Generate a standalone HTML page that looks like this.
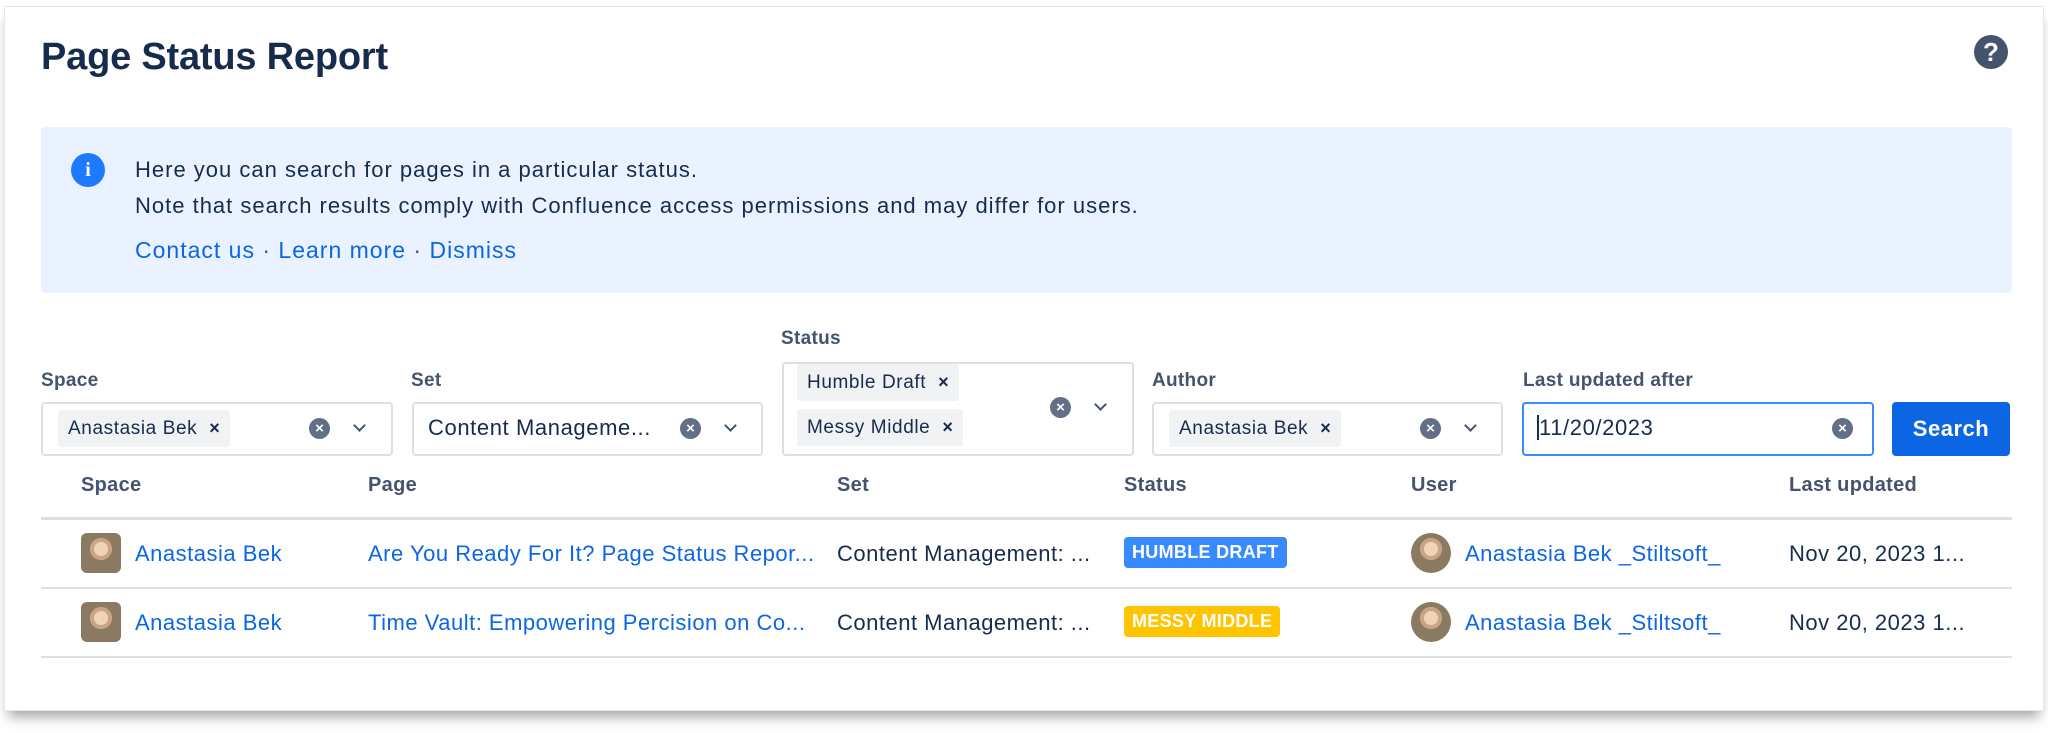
<!DOCTYPE html>
<html><head><meta charset="utf-8"><style>
*{box-sizing:border-box;margin:0;padding:0}
body{width:2048px;height:733px;background:#fff;font-family:"Liberation Sans",Arial,sans-serif;position:relative;overflow:hidden;color:#172b4d}
.card{position:absolute;left:4px;top:6px;width:2040px;height:705px;background:#fff;border:1px solid #e6e6e6;box-shadow:0 10px 12px -4px rgba(0,0,0,.35)}
.a{position:absolute;white-space:nowrap}
h1{position:absolute;left:41px;top:36px;font-size:38px;font-weight:bold;color:#172b4d;letter-spacing:-.2px}
.info{position:absolute;left:41px;top:127px;width:1971px;height:166px;background:#e9f2fe;border-radius:4px}
.t22{font-size:22px;line-height:28px;letter-spacing:.5px}
.ti{font-size:22px;line-height:28px;letter-spacing:1px}
.lnk{color:#0c66e4}
.lbl{font-size:19px;font-weight:bold;color:#44546f;letter-spacing:.3px}
.box{position:absolute;top:402px;height:54px;border:2px solid #dcdfe4;border-radius:4px;background:#fff}
.chip{position:absolute;background:#f1f2f4;border-radius:3px;height:37px;font-size:19px;line-height:37px;padding:0 10px;color:#172b4d;letter-spacing:.6px}
.chip b{font-weight:bold;margin-left:12px;font-size:18px}
.clr{position:absolute;width:21px;height:21px;border-radius:50%;background:#626f86;color:#fff;font-size:15px;font-weight:bold;text-align:center;line-height:21px}
.chev{position:absolute;width:9px;height:9px;border-right:2.5px solid #44546f;border-bottom:2.5px solid #44546f;transform:rotate(45deg)}
.th{position:absolute;top:474px;font-size:20px;font-weight:bold;color:#44546f;letter-spacing:.3px}
.hr{position:absolute;left:41px;width:1971px;background:#dcdfe4}
.av{position:absolute;width:40px;height:40px;border-radius:6px;background:radial-gradient(circle at 50% 40%,#f1d2b5 0 22%,#c9a585 23% 35%,#8a7a62 36%)}
.avr{border-radius:50%}
.loz{position:absolute;height:31px;line-height:31px;padding:0 8px;border-radius:4px;color:#fff;font-weight:bold;font-size:18px;letter-spacing:.3px}
</style></head><body>
<div class="card"></div>
<h1>Page Status Report</h1>
<div class="a" style="left:1974px;top:35px;width:34px;height:34px;border-radius:50%;background:#44546f;color:#fff;font-weight:bold;font-size:26px;text-align:center;line-height:34px">?</div>
<div class="info"></div>
<div class="a" style="left:71px;top:153px;width:34px;height:34px;border-radius:50%;background:#1d7afc;color:#fff;font-weight:bold;font-size:20px;text-align:center;line-height:34px;font-family:'Liberation Serif',serif">i</div>
<div class="a ti" style="left:135px;top:156px">Here you can search for pages in a particular status.</div>
<div class="a ti" style="left:135px;top:192px">Note that search results comply with Confluence access permissions and may differ for users.</div>
<div class="a" style="left:135px;top:236px;font-size:23px;line-height:28px;letter-spacing:1px"><span class="lnk">Contact us</span> <span style="color:#44546f">·</span> <span class="lnk">Learn more</span> <span style="color:#44546f">·</span> <span class="lnk">Dismiss</span></div>

<div class="a lbl" style="left:41px;top:370px">Space</div>
<div class="a lbl" style="left:411px;top:370px">Set</div>
<div class="a lbl" style="left:781px;top:328px">Status</div>
<div class="a lbl" style="left:1152px;top:370px">Author</div>
<div class="a lbl" style="left:1523px;top:370px">Last updated after</div>

<div class="box" style="left:41px;width:352px"></div>
<div class="chip" style="left:58px;top:410px">Anastasia Bek<b>×</b></div>
<div class="clr" style="left:309px;top:418px">×</div>
<div class="chev" style="left:355px;top:421px"></div>

<div class="box" style="left:412px;width:351px"></div>
<div class="a" style="left:428px;top:415px;font-size:22px;letter-spacing:.6px">Content Manageme...</div>
<div class="clr" style="left:680px;top:418px">×</div>
<div class="chev" style="left:726px;top:421px"></div>

<div class="box" style="left:782px;width:352px;top:362px;height:94px"></div>
<div class="chip" style="left:797px;top:364px">Humble Draft<b>×</b></div>
<div class="chip" style="left:797px;top:409px">Messy Middle<b>×</b></div>
<div class="clr" style="left:1050px;top:397px">×</div>
<div class="chev" style="left:1096px;top:400px"></div>

<div class="box" style="left:1152px;width:351px"></div>
<div class="chip" style="left:1169px;top:410px">Anastasia Bek<b>×</b></div>
<div class="clr" style="left:1420px;top:418px">×</div>
<div class="chev" style="left:1466px;top:421px"></div>

<div class="box" style="left:1522px;width:352px;border-color:#388bff"></div>
<div class="a" style="left:1537px;top:415px;font-size:22px;letter-spacing:.6px"><span style="border-left:2px solid #172b4d">11/20/2023</span></div>
<div class="clr" style="left:1832px;top:418px">×</div>
<div class="a" style="left:1892px;top:402px;width:118px;height:54px;background:#0c66e4;border-radius:4px;color:#fff;font-weight:bold;font-size:22px;text-align:center;line-height:54px;letter-spacing:.5px">Search</div>

<div class="th" style="left:81px">Space</div>
<div class="th" style="left:368px">Page</div>
<div class="th" style="left:837px">Set</div>
<div class="th" style="left:1124px">Status</div>
<div class="th" style="left:1411px">User</div>
<div class="th" style="left:1789px">Last updated</div>
<div class="hr" style="top:517px;height:3px"></div>
<div class="hr" style="top:587px;height:2px"></div>
<div class="hr" style="top:656px;height:2px"></div>

<div class="av" style="left:81px;top:533px"></div>
<div class="a t22 lnk" style="left:135px;top:540px">Anastasia Bek</div>
<div class="a t22 lnk" style="left:368px;top:540px">Are You Ready For It? Page Status Repor...</div>
<div class="a t22" style="left:837px;top:540px">Content Management: ...</div>
<div class="loz" style="left:1124px;top:537px;background:#388bff">HUMBLE DRAFT</div>
<div class="av avr" style="left:1411px;top:533px"></div>
<div class="a t22 lnk" style="left:1465px;top:540px">Anastasia Bek _Stiltsoft_</div>
<div class="a t22" style="left:1789px;top:540px">Nov 20, 2023 1...</div>

<div class="av" style="left:81px;top:602px"></div>
<div class="a t22 lnk" style="left:135px;top:609px">Anastasia Bek</div>
<div class="a t22 lnk" style="left:368px;top:609px">Time Vault: Empowering Percision on Co...</div>
<div class="a t22" style="left:837px;top:609px">Content Management: ...</div>
<div class="loz" style="left:1124px;top:606px;background:#ffc400">MESSY MIDDLE</div>
<div class="av avr" style="left:1411px;top:602px"></div>
<div class="a t22 lnk" style="left:1465px;top:609px">Anastasia Bek _Stiltsoft_</div>
<div class="a t22" style="left:1789px;top:609px">Nov 20, 2023 1...</div>
</body></html>
